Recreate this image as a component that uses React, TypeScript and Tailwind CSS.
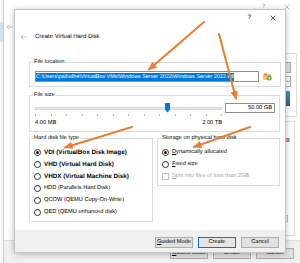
import React from "react";

function Radio({ checked, label, bold }: { checked?: boolean; label: React.ReactNode; bold?: boolean }) {
  return (
    <div className="flex h-[12px] items-center">
      <span className="ml-[1px] flex h-[7px] w-[7px] shrink-0 items-center justify-center rounded-full border border-[#333333] bg-white">
        {checked && <span className="h-[3px] w-[3px] rounded-full bg-[#1a1a1a]" />}
      </span>
      <span className={bold ? "ml-[3px] whitespace-nowrap text-[6.3px] font-bold" : "ml-[3px] whitespace-nowrap"}>{label}</span>
    </div>
  );
}

function CloseX({ color, size }: { color: string; size: number }) {
  return (
    <svg width={size} height={size} viewBox="0 0 10 10">
      <path d="M1 1 L9 9 M9 1 L1 9" stroke={color} strokeWidth="1.1" fill="none" />
    </svg>
  );
}

function BackArrow({ color }: { color: string }) {
  return (
    <svg width="7" height="6" viewBox="0 0 14 12">
      <path d="M13 6 H2 M6.5 1.5 L2 6 L6.5 10.5" stroke={color} strokeWidth="1.4" fill="none" />
    </svg>
  );
}

function FolderIcon() {
  return (
    <svg width="9" height="9" viewBox="0 0 18 18">
      <path d="M1 3 H7 L9 5 H16 V15 H1 Z" fill="#d9952a" />
      <path d="M1 7 H17 L16 15 H1 Z" fill="#f6c04e" />
      <circle cx="12.5" cy="12.5" r="4.5" fill="#3a9a3a" />
      <path d="M12.5 9.5 L15.2 12.6 H13.6 V15.2 H11.4 V12.6 H9.8 Z" fill="#ffffff" />
    </svg>
  );
}

function Btn({ children, def }: { children: React.ReactNode; def?: boolean }) {
  return (
    <div
      className={
        def
          ? "flex h-[11px] w-[38px] items-center justify-center border border-[#0078d7] bg-[#e5e5e5]"
          : "flex h-[11px] w-[38px] items-center justify-center border border-[#adadad] bg-[#e1e1e1]"
      }
    >
      {children}
    </div>
  );
}

export default function App() {
  const ticks = Array.from({ length: 13 });
  return (
    <div className="relative h-[263px] w-[300px] overflow-hidden bg-white font-['Liberation_Sans',Arial,sans-serif] text-[5.7px] leading-[7px] text-black [text-rendering:geometricPrecision]">
      {/* Background (larger) dialog */}
      <div className="absolute inset-0 flex">
        <div className="flex w-[3px] flex-col bg-[#f7f7f7]">
          <div className="mt-[22px] h-[20px] bg-[#cfe3f5]" />
        </div>
        <div className="flex flex-1 flex-col border-l border-[#cdcdcd]">
          <div className="flex h-[14px] items-center justify-end pr-[10px] text-[6px] text-[#8a8a8a]">
            <span className="mr-[19px]">?</span>
            <CloseX color="#9a9a9a" size={6} />
          </div>
          <div className="flex flex-1">
            <div className="flex-1 pl-[2px] pt-[10px]">
              <BackArrow color="#b0b0b0" />
            </div>
            <div className="flex w-[15px] flex-col pt-[39px]">
              <div className="mr-[3px] flex h-[64px] flex-col border-y border-r border-[#dcdcdc] pt-[8px]">
                <div className="h-[11px] w-[6px] border border-[#adadad] bg-[#e1e1e1]" />
                <div className="mt-[3px] flex h-[11px] w-[6px] items-center justify-center border border-[#adadad] bg-white">
                  <svg width="4" height="3" viewBox="0 0 8 6">
                    <path d="M1 1 L4 4.5 L7 1" stroke="#555" strokeWidth="1.2" fill="none" />
                  </svg>
                </div>
                <div className="ml-[1px] mt-[4px] h-[15px] w-[4px] bg-gradient-to-b from-[#4d8fd1] to-[#2a5f9e]" />
              </div>
              <div className="mr-[5px] mt-[4px] flex h-[115px] flex-col border-y border-r border-[#dcdcdc] pt-[16px]">
                <span className="ml-[1px] text-[5.7px] text-[#333]">B</span>
                <div className="mt-[70px] h-[7px] w-[3px] border-y border-r border-[#bdbdbd]" />
              </div>
            </div>
          </div>
          <div className="flex h-[23px] justify-end gap-[5px] border-t border-[#dfdfdf] bg-[#f0f0f0] pr-[6px] pt-[7px]">
            <Btn>
              <span>
                <span className="underline">G</span>uided Mode
              </span>
            </Btn>
            <Btn>Create</Btn>
            <Btn>Cancel</Btn>
          </div>
        </div>
      </div>

      {/* Front dialog */}
      <div className="absolute left-[15px] top-[10px] flex h-[242px] w-[270px] flex-col bg-white shadow-[0_1px_7px_rgba(0,0,0,0.35)] ring-1 ring-[#c4c4c4]">
        <div className="flex h-[15px] items-center justify-end pr-[9px] text-[6.5px]">
          <span className="mr-[19px]">?</span>
          <CloseX color="#111" size={6} />
        </div>
        <div className="flex h-[24px] items-center pl-[5px]">
          <BackArrow color="#a8a8a8" />
          <span className="ml-[8px] text-[6px]">Create Virtual Hard Disk</span>
        </div>

        <div className="flex flex-col pl-[14px] pr-[5px]">
          {/* File location */}
          <fieldset className="mt-[10px] border border-[#dcdcdc] pb-[4px] pl-[3px] pr-[8px] pt-[5px]">
            <legend className="px-[1px]">File location</legend>
            <div className="flex items-center">
              <div className="ml-[2px] flex h-[11px] w-[224px] items-center overflow-hidden border border-[#8f8f8f] bg-white">
                <span className="whitespace-nowrap bg-[#0078d7] text-[5.4px] leading-[8px] text-white">
                  C:\Users\paifudhe\VirtualBox VMs\Windows Server 2022\Windows Server 2022.vdi
                </span>
              </div>
              <div className="ml-[4px] flex">
                <FolderIcon />
              </div>
            </div>
          </fieldset>

          {/* File size */}
          <fieldset className="mt-[5px] border border-[#dcdcdc] pb-[4px] pl-[3px] pr-[4px] pt-[4px]">
            <legend className="px-[1px]">File size</legend>
            <div className="flex">
              <div className="ml-[2px] flex w-[187px] flex-col">
                <div className="relative flex h-[10px] items-center">
                  <div className="h-[3px] flex-1 border border-[#d6d6d6] bg-[#e7e7e7]" />
                  <svg className="absolute left-[130px] top-0" width="5" height="10" viewBox="0 0 5 10">
                    <path d="M0 0 H5 V6.5 L2.5 9.5 L0 6.5 Z" fill="#0078d7" />
                  </svg>
                </div>
                <div className="mt-[1px] flex h-[2px] justify-between">
                  {ticks.map((_, i) => (
                    <span key={i} className="h-[2px] w-[1px] bg-[#b8b8b8]" />
                  ))}
                </div>
                <div className="mt-[4px] flex justify-between">
                  <span>4.00 MB</span>
                  <span>2.00 TB</span>
                </div>
              </div>
              <div className="ml-[3px] flex h-[10px] w-[50px] items-center justify-end border border-[#8f8f8f] bg-white pr-[2px]">
                50.00 GB
              </div>
            </div>
          </fieldset>

          {/* Bottom groups */}
          <div className="mt-[3px] flex items-start gap-[4px]">
            <fieldset className="w-[124px] border border-[#dcdcdc] pb-[3px] pl-[3px] pt-[4px]">
              <legend className="px-[1px]">Hard disk file type</legend>
              <Radio checked bold label="VDI (VirtualBox Disk Image)" />
              <Radio bold label="VHD (Virtual Hard Disk)" />
              <Radio bold label="VHDX (Virtual Machine Disk)" />
              <Radio label="HDD (Parallels Hard Disk)" />
              <Radio label="QCOW (QEMU Copy-On-Write)" />
              <Radio label="QED (QEMU enhanced disk)" />
            </fieldset>
            <fieldset className="flex-1 border border-[#dcdcdc] pb-[3px] pl-[3px] pt-[4px]">
              <legend className="px-[1px]">Storage on physical hard disk</legend>
              <Radio
                checked
                label={
                  <span>
                    <span className="underline">D</span>ynamically allocated
                  </span>
                }
              />
              <Radio
                label={
                  <span>
                    <span className="underline">F</span>ixed size
                  </span>
                }
              />
              <div className="flex h-[12px] items-center">
                <span className="ml-[1px] h-[7px] w-[7px] border border-[#c2c2c2] bg-white" />
                <span className="ml-[3px] whitespace-nowrap text-[#a3a3a3]">
                  <span className="underline">S</span>plit into files of less than 2GB
                </span>
              </div>
            </fieldset>
          </div>
        </div>

        <div className="mt-auto flex h-[22px] justify-end gap-[5px] bg-[#f0f0f0] pr-[6px] pt-[7px]">
          <Btn>
            <span>
              <span className="underline">G</span>uided Mode
            </span>
          </Btn>
          <Btn def>Create</Btn>
          <Btn>Cancel</Btn>
        </div>
      </div>

      {/* Orange annotation arrows */}
      <svg className="pointer-events-none absolute left-0 top-0" width="300" height="263" viewBox="0 0 300 263">
        <defs>
          <marker id="ah" markerWidth="4.2" markerHeight="3.6" refX="3.6" refY="1.8" orient="auto" markerUnits="strokeWidth">
            <path d="M0 0 L4.2 1.8 L0 3.6 Z" fill="#ed7d31" />
          </marker>
        </defs>
        <g stroke="#ed7d31" strokeWidth="2.1" strokeLinecap="round" fill="none">
          <line x1="204" y1="22" x2="149" y2="69.5" markerEnd="url(#ah)" />
          <line x1="219" y1="34" x2="236" y2="98.5" markerEnd="url(#ah)" />
          <line x1="132" y1="127" x2="65" y2="147.5" markerEnd="url(#ah)" />
          <line x1="250" y1="127" x2="194" y2="147" markerEnd="url(#ah)" />
        </g>
      </svg>
    </div>
  );
}
